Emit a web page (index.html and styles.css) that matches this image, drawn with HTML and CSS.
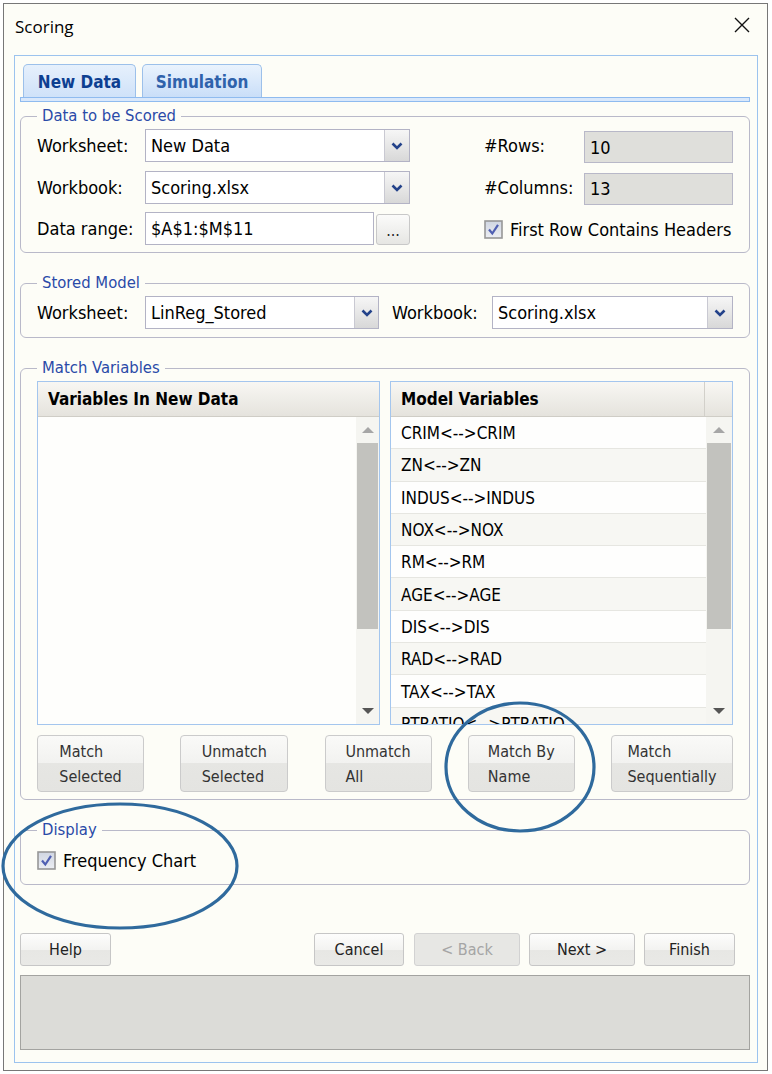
FILE: index.html
```html
<!DOCTYPE html>
<html>
<head>
<meta charset="utf-8">
<title>Scoring</title>
<link rel="stylesheet" href="styles.css">
</head>
<body>
<div class="window">
  <div class="titlebar">
    <span class="title">Scoring</span>
    <svg class="close" width="16" height="16" viewBox="0 0 16 16"><path d="M1 1 L15 15 M15 1 L1 15" stroke="#111" stroke-width="1.4" fill="none"/></svg>
  </div>
  <div class="panel">
    <div class="tabs">
      <div class="tab active">New Data</div>
      <div class="tab sim">Simulation</div>
    </div>
    <div class="tabbar"></div>

    <fieldset class="group g-data">
      <legend>Data to be Scored</legend>
      <div class="grid-data">
        <div class="lbl">Worksheet:</div>
        <div class="select"><span class="val">New Data</span><span class="dd"><svg width="12" height="8" viewBox="0 0 12 8"><path d="M1.5 1.5 L6 6 L10.5 1.5" stroke="#23428a" stroke-width="2.6" fill="none"/></svg></span></div>
        <div></div>
        <div class="lbl">#Rows:</div>
        <div class="ro">10</div>

        <div class="lbl">Workbook:</div>
        <div class="select"><span class="val">Scoring.xlsx</span><span class="dd"><svg width="12" height="8" viewBox="0 0 12 8"><path d="M1.5 1.5 L6 6 L10.5 1.5" stroke="#23428a" stroke-width="2.6" fill="none"/></svg></span></div>
        <div></div>
        <div class="lbl">#Columns:</div>
        <div class="ro">13</div>

        <div class="lbl">Data range:</div>
        <div class="range"><div class="input">$A$1:$M$11</div><div class="dots">...</div></div>
        <div></div>
        <div class="check span2"><svg class="cb" width="19" height="19" viewBox="0 0 19 19"><defs><linearGradient id="cbg" x1="0" y1="0" x2="0" y2="1"><stop offset="0" stop-color="#d0d6e2"/><stop offset="1" stop-color="#eceef3"/></linearGradient></defs><rect x="1" y="1" width="17" height="17" fill="url(#cbg)" stroke="#979797" stroke-width="1.6"/><path d="M5 9.5 L8.3 13.5 L14 4.8" stroke="#4f5fb2" stroke-width="2.2" fill="none"/></svg><span>First Row Contains Headers</span></div>
      </div>
    </fieldset>

    <fieldset class="group g-model">
      <legend>Stored Model</legend>
      <div class="row-model">
        <div class="lbl w108">Worksheet:</div>
        <div class="select s234"><span class="val">LinReg_Stored</span><span class="dd"><svg width="12" height="8" viewBox="0 0 12 8"><path d="M1.5 1.5 L6 6 L10.5 1.5" stroke="#23428a" stroke-width="2.6" fill="none"/></svg></span></div>
        <div class="lbl w100">Workbook:</div>
        <div class="select s241"><span class="val">Scoring.xlsx</span><span class="dd"><svg width="12" height="8" viewBox="0 0 12 8"><path d="M1.5 1.5 L6 6 L10.5 1.5" stroke="#23428a" stroke-width="2.6" fill="none"/></svg></span></div>
      </div>
    </fieldset>

    <fieldset class="group g-match">
      <legend>Match Variables</legend>
      <div class="lists">
        <div class="list">
          <div class="lhead"><span class="hcell">Variables In New Data</span></div>
          <div class="lbody">
            <div class="items"></div>
            <div class="scroll s-left">
              <div class="arrow up"></div>
              <div class="thumb"></div>
              <div class="track"></div>
              <div class="arrow down"></div>
            </div>
          </div>
        </div>
        <div class="list">
          <div class="lhead"><span class="hcell">Model Variables</span><span class="hcorner"></span></div>
          <div class="lbody">
            <div class="items">
              <div class="item">CRIM&lt;--&gt;CRIM</div>
              <div class="item alt">ZN&lt;--&gt;ZN</div>
              <div class="item">INDUS&lt;--&gt;INDUS</div>
              <div class="item alt">NOX&lt;--&gt;NOX</div>
              <div class="item">RM&lt;--&gt;RM</div>
              <div class="item alt">AGE&lt;--&gt;AGE</div>
              <div class="item">DIS&lt;--&gt;DIS</div>
              <div class="item alt">RAD&lt;--&gt;RAD</div>
              <div class="item">TAX&lt;--&gt;TAX</div>
              <div class="item alt">PTRATIO&lt;--&gt;PTRATIO</div>
            </div>
            <div class="scroll s-right">
              <div class="arrow up"></div>
              <div class="thumb"></div>
              <div class="track"></div>
              <div class="arrow down"></div>
            </div>
          </div>
        </div>
      </div>
      <div class="mbtns">
        <div class="mbtn w107"><span>Match<br>Selected</span></div>
        <div class="mbtn w108b"><span>Unmatch<br>Selected</span></div>
        <div class="mbtn w107"><span>Unmatch<br>All</span></div>
        <div class="mbtn w107"><span>Match By<br>Name</span></div>
        <div class="mbtn w122"><span>Match<br>Sequentially</span></div>
      </div>
    </fieldset>

    <fieldset class="group g-display">
      <legend>Display</legend>
      <div class="check"><svg class="cb" width="19" height="19" viewBox="0 0 19 19"><rect x="1" y="1" width="17" height="17" fill="url(#cbg)" stroke="#979797" stroke-width="1.6"/><path d="M5 9.5 L8.3 13.5 L14 4.8" stroke="#4f5fb2" stroke-width="2.2" fill="none"/></svg><span>Frequency Chart</span></div>
    </fieldset>

    <div class="navrow">
      <div class="btn b-help">Help</div>
      <div class="spacer"></div>
      <div class="btn b-cancel">Cancel</div>
      <div class="btn b-back disabled">&lt; Back</div>
      <div class="btn b-next">Next &gt;</div>
      <div class="btn b-finish">Finish</div>
    </div>

    <div class="status"></div>
  </div>
</div>
<svg class="annot" width="772" height="1074" viewBox="0 0 772 1074">
  <ellipse cx="520" cy="767" rx="74" ry="64" fill="none" stroke="#2f6a9d" stroke-width="3.2"/>
  <ellipse cx="120" cy="866" rx="117" ry="62" fill="none" stroke="#2f6a9d" stroke-width="3.2"/>
</svg>
</body>
</html>
```

FILE: styles.css
```css
* { box-sizing: border-box; }
html, body { margin: 0; padding: 0; background: #ffffff; }
body {
  font-family: "DejaVu Sans Condensed", "DejaVu Sans", sans-serif;
  font-size: 18px;
  color: #000;
}
.window {
  margin: 3px 0 0 3px;
  width: 765px;
  height: 1068px;
  border: 1px solid #777;
  background: #fdfdf7;
}
.titlebar {
  height: 51px;
  display: flex;
  align-items: center;
  justify-content: space-between;
  padding: 0 17px 6px 11px;
}
.title {
  font-family: "Open Sans", "Noto Sans", sans-serif;
  font-size: 17px;
}
.close { display: block; margin-bottom: 3px; }

.panel {
  margin-left: 10px;
  width: 744px;
  border: 1px solid #9cc3ee;
  padding: 8px 7px 12px 5px;
}
.tabs {
  display: flex;
  gap: 6px;
  padding-left: 3px;
  height: 33px;
}
.tab {
  height: 33px;
  border: 1px solid #9cc0ea;
  border-bottom: none;
  border-radius: 5px 5px 0 0;
  background: linear-gradient(#eaf3fd, #c9def8);
  font-weight: bold;
  font-size: 17px;
  color: #2f62ab;
  display: flex;
  align-items: center;
  justify-content: center;
  padding-top: 2px;
}
.tab.active { width: 113px; color: #0d3f91; background: linear-gradient(#e6f0fc, #cfe2f9); }
.tab.sim { width: 120px; }
.tabbar {
  height: 5px;
  border: 1px solid #8fbbef;
  background: #d9e8fb;
}

.group {
  margin: 20px 0 0;
  padding: 2px 16px 8px;
  border: 1px solid #b9b9c9;
  border-radius: 6px;
  min-width: 0;
}
.group legend {
  padding: 0 5px;
  font-size: 16.5px;
  line-height: 20px;
  color: #2a4aa8;
}
.g-data { margin-top: 4px; padding-top: 3px; padding-bottom: 7px; }
.g-model { padding-top: 3px; }
.g-match { padding-top: 3px; padding-bottom: 7px; }
.g-display { padding-top: 8px; padding-bottom: 11px; }

.lbl { display: flex; align-items: center; white-space: nowrap; }
.grid-data {
  display: grid;
  grid-template-columns: 108px 265px 74px 100px 149px;
  grid-template-rows: 33px 32px 33px;
  row-gap: 9px;
}
.select {
  display: flex;
  border: 1px solid #b3b3c5;
  background: #fff;
  height: 33px;
}
.select .val {
  flex: 1;
  padding-left: 5px;
  display: flex;
  align-items: center;
  white-space: nowrap;
  overflow: hidden;
}
.select .dd {
  width: 25px;
  border-left: 1px solid #c9c9d2;
  background: linear-gradient(#f6f6f6, #d8d8d8);
  display: flex;
  align-items: center;
  justify-content: center;
}
.ro {
  align-self: center;
  height: 32px;
  margin-top: 3px;
  border: 1px solid #b8b8c8;
  background: #dfdfdb;
  padding-left: 5px;
  display: flex;
  align-items: center;
}
.range { display: flex; gap: 2px; }
.range .input {
  width: 229px;
  border: 1px solid #b3b3c5;
  background: #fff;
  padding-left: 5px;
  display: flex;
  align-items: center;
}
.dots {
  width: 34px;
  height: 31px;
  margin-top: 2px;
  border: 1px solid #c8c8c8;
  border-radius: 3px;
  background: linear-gradient(#fbfbfa, #e6e6e3);
  font-size: 16px;
  display: flex;
  align-items: center;
  justify-content: center;
  padding-top: 2px;
  color: #222;
}
.check { display: flex; align-items: center; gap: 7px; height: 25px; white-space: nowrap; }
.grid-data .check { align-self: center; margin-top: 2px; }
.span2 { grid-column: 4 / span 2; }
.cb { display: block; flex: none; }

.row-model { display: flex; height: 33px; }
.w108 { width: 108px; }
.w100 { width: 100px; margin-left: 13px; }
.s234 { width: 234px; }
.s241 { width: 241px; }
.s234 .dd { width: 24px; }

.lists {
  display: grid;
  grid-template-columns: 1fr 1fr;
  gap: 10px;
}
.list {
  height: 344px;
  border: 1px solid #a4c6ee;
  background: #fefefc;
  display: flex;
  flex-direction: column;
  overflow: hidden;
}
.lhead {
  height: 35px;
  flex: none;
  display: flex;
  background: linear-gradient(#f8f7f3, #e5e3dd);
  border-bottom: 1px solid #cfcdc6;
  font-weight: bold;
  font-size: 17px;
}
.hcell { flex: 1; display: flex; align-items: center; padding-left: 10px; white-space: nowrap; }
.hcorner { width: 28px; border-left: 1px solid #d2d0ca; }
.lbody { flex: 1; display: flex; min-height: 0; }
.items { flex: 1; overflow: hidden; }
.item {
  height: 32.3px;
  border-bottom: 1px solid #e6e6e1;
  padding-left: 10px;
  padding-top: 1px;
  font-size: 17px;
  display: flex;
  align-items: center;
  white-space: nowrap;
  background: #fefefd;
}
.item.alt { background: #f7f7f3; }
.scroll {
  display: flex;
  flex-direction: column;
  background: #f5f5f1;
}
.s-left { width: 23px; }
.s-right { width: 26px; }
.arrow {
  height: 26px;
  flex: none;
  display: flex;
  align-items: center;
  justify-content: center;
}
.arrow::before {
  content: "";
  width: 0;
  height: 0;
  border-left: 6px solid transparent;
  border-right: 6px solid transparent;
}
.arrow.up::before { border-bottom: 6px solid #a6a6a6; }
.arrow.down::before { border-top: 6px solid #555; }
.thumb { height: 186px; flex: none; background: #c2c2be; margin: 0 1px; }
.track { flex: 1; }

.mbtns {
  margin-top: 10px;
  display: flex;
  justify-content: space-between;
}
.mbtn {
  height: 57px;
  border: 1px solid #cbcbcb;
  border-radius: 4px;
  background: linear-gradient(#fafaf8 0%, #f2f2f0 49%, #e6e6e3 49%, #e4e4e1 100%);
  display: flex;
  align-items: center;
  justify-content: center;
  font-size: 16px;
  line-height: 25px;
  color: #333;
}
.mbtn span { text-align: left; white-space: nowrap; }
.w107 { width: 107px; }
.w108b { width: 108px; }
.w122 { width: 122px; }

.navrow {
  margin-top: 48px;
  display: flex;
  height: 33px;
  padding-right: 15px;
}
.spacer { flex: 1; }
.btn {
  height: 33px;
  border: 1px solid #c6c6c6;
  border-radius: 3px;
  background: linear-gradient(#fdfdfc 0%, #f3f3f1 50%, #e7e7e4 52%, #e9e9e6 100%);
  font-size: 16px;
  color: #222;
  display: flex;
  align-items: center;
  justify-content: center;
}
.b-help { width: 91px; }
.b-cancel { width: 90px; }
.b-back { width: 106px; margin-left: 10px; }
.b-next { width: 106px; margin-left: 9px; }
.b-finish { width: 91px; margin-left: 9px; }
.btn.disabled { background: #e7e7e4; color: #a5a5a5; border-color: #d2d2d2; }

.status {
  margin-top: 9px;
  height: 75px;
  border: 1px solid #a3a3a0;
  background: #dcdcd8;
}

.annot {
  position: absolute;
  top: 0;
  left: 0;
  pointer-events: none;
}
```
